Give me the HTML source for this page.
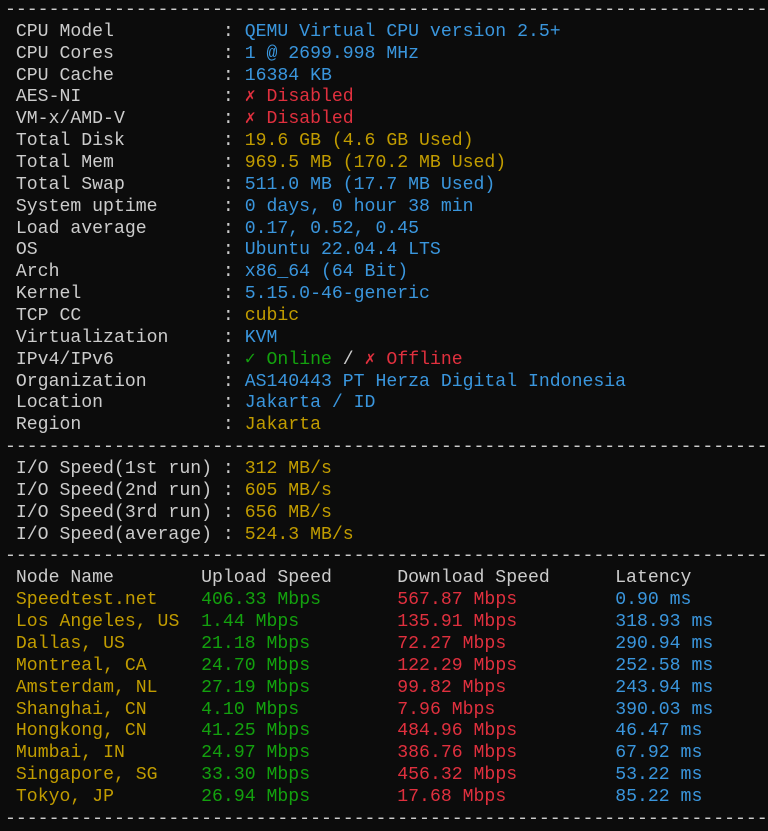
<!DOCTYPE html>
<html><head><meta charset="utf-8"><style>
html,body{margin:0;padding:0;background:#0c0c0c;width:768px;height:822px;overflow:hidden}
pre{margin:0;position:absolute;left:5px;top:0px;font-family:"Liberation Mono","DejaVu Sans Mono",monospace;font-size:18.17px;line-height:21.86px;color:#cccccc;white-space:pre}
.b{color:#3a96dd}.y{color:#c19c00}.r{color:#e0303e}.g{color:#13a10e}
</style></head><body><pre>----------------------------------------------------------------------
 CPU Model          : <span class="b">QEMU Virtual CPU version 2.5+</span>
 CPU Cores          : <span class="b">1 @ 2699.998 MHz</span>
 CPU Cache          : <span class="b">16384 KB</span>
 AES-NI             : <span class="r">✗ Disabled</span>
 VM-x/AMD-V         : <span class="r">✗ Disabled</span>
 Total Disk         : <span class="y">19.6 GB (4.6 GB Used)</span>
 Total Mem          : <span class="y">969.5 MB (170.2 MB Used)</span>
 Total Swap         : <span class="b">511.0 MB (17.7 MB Used)</span>
 System uptime      : <span class="b">0 days, 0 hour 38 min</span>
 Load average       : <span class="b">0.17, 0.52, 0.45</span>
 OS                 : <span class="b">Ubuntu 22.04.4 LTS</span>
 Arch               : <span class="b">x86_64 (64 Bit)</span>
 Kernel             : <span class="b">5.15.0-46-generic</span>
 TCP CC             : <span class="y">cubic</span>
 Virtualization     : <span class="b">KVM</span>
 IPv4/IPv6          : <span class="g">✓ Online</span> / <span class="r">✗ Offline</span>
 Organization       : <span class="b">AS140443 PT Herza Digital Indonesia</span>
 Location           : <span class="b">Jakarta / ID</span>
 Region             : <span class="y">Jakarta</span>
----------------------------------------------------------------------
 I/O Speed(1st run) : <span class="y">312 MB/s</span>
 I/O Speed(2nd run) : <span class="y">605 MB/s</span>
 I/O Speed(3rd run) : <span class="y">656 MB/s</span>
 I/O Speed(average) : <span class="y">524.3 MB/s</span>
----------------------------------------------------------------------
 Node Name        Upload Speed      Download Speed      Latency
 <span class="y">Speedtest.net    </span><span class="g">406.33 Mbps       </span><span class="r">567.87 Mbps         </span><span class="b">0.90 ms</span>
 <span class="y">Los Angeles, US  </span><span class="g">1.44 Mbps         </span><span class="r">135.91 Mbps         </span><span class="b">318.93 ms</span>
 <span class="y">Dallas, US       </span><span class="g">21.18 Mbps        </span><span class="r">72.27 Mbps          </span><span class="b">290.94 ms</span>
 <span class="y">Montreal, CA     </span><span class="g">24.70 Mbps        </span><span class="r">122.29 Mbps         </span><span class="b">252.58 ms</span>
 <span class="y">Amsterdam, NL    </span><span class="g">27.19 Mbps        </span><span class="r">99.82 Mbps          </span><span class="b">243.94 ms</span>
 <span class="y">Shanghai, CN     </span><span class="g">4.10 Mbps         </span><span class="r">7.96 Mbps           </span><span class="b">390.03 ms</span>
 <span class="y">Hongkong, CN     </span><span class="g">41.25 Mbps        </span><span class="r">484.96 Mbps         </span><span class="b">46.47 ms</span>
 <span class="y">Mumbai, IN       </span><span class="g">24.97 Mbps        </span><span class="r">386.76 Mbps         </span><span class="b">67.92 ms</span>
 <span class="y">Singapore, SG    </span><span class="g">33.30 Mbps        </span><span class="r">456.32 Mbps         </span><span class="b">53.22 ms</span>
 <span class="y">Tokyo, JP        </span><span class="g">26.94 Mbps        </span><span class="r">17.68 Mbps          </span><span class="b">85.22 ms</span>
----------------------------------------------------------------------
</pre></body></html>
